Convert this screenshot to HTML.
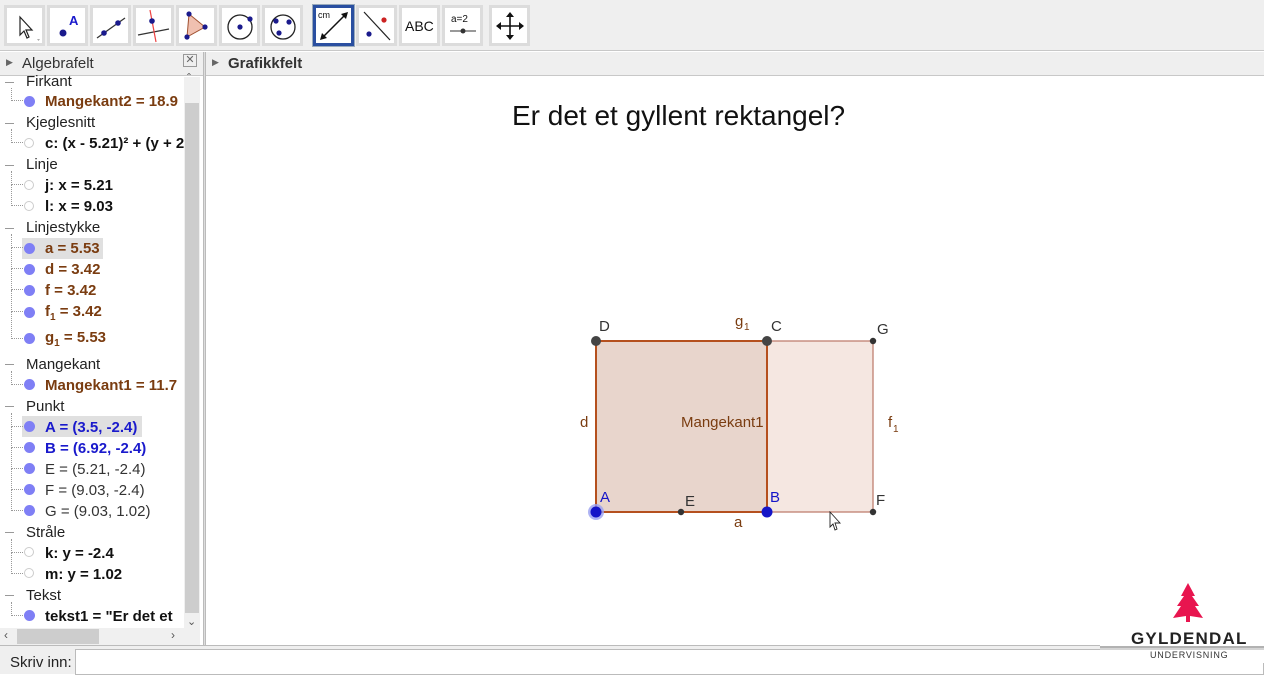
<!DOCTYPE html>
<html><head><meta charset="utf-8"><style>
*{margin:0;padding:0;box-sizing:border-box}
body{width:1264px;height:674px;overflow:hidden;background:#fff;font-family:"Liberation Sans",sans-serif;position:relative}
.abs{position:absolute}
#tb{left:0;top:0;width:1264px;height:51px;background:#efefef;border-bottom:1px solid #c8c8c8}
.btn{position:absolute;top:5px;width:41px;height:41px;background:#fff;border:3px solid #dcdcdc}
.btn.sel{border:3px solid #2a4fa0;outline:1px solid #9ab}
.btn svg{position:absolute;left:0;top:0}
.hdr{top:52px;height:24px;background:#efefef;border-bottom:1px solid #c8c8c8;font-size:15px;color:#333}
.row{position:absolute;left:0;font-size:15px;white-space:nowrap;height:21px;line-height:21px}
.cat{left:26px;color:#222}
.it{left:45px;font-weight:bold}
.br{color:#7a3c10}.bl{color:#1a1acc}.bk{color:#111}.gr{color:#333;font-weight:normal}
.dot{position:absolute;left:24px;width:11px;height:11px;border-radius:50%;background:#7f7ff5}
.odot{position:absolute;left:24px;width:10px;height:10px;border-radius:50%;border:1px solid #ccc;background:#fff}
.minus{position:absolute;left:5px;width:9px;height:1px;background:#999}
.tree{position:absolute;border-left:1px dotted #999;border-bottom:1px dotted #999;left:11px;width:12px}
.hl{position:absolute;background:#e0e0e0}
sub{font-size:10px}
</style></head><body>
<div id="tb" class="abs">
<div class="btn" style="left:4px"><svg width="35" height="35"><path d="M13 9 L13 27 L17 23 L20 30 L22 29 L19 22 L25 22 Z" fill="#fff" stroke="#222" stroke-width="1.2"/><path d="M30 31l3 0-1.5 2z" fill="#aaa"/></svg></div>
<div class="btn" style="left:47px"><svg width="35" height="35"><circle cx="13" cy="25" r="3.5" fill="#1a1a8c"/><text x="19" y="17" font-family="Liberation Sans" font-weight="bold" font-size="13" fill="#1a1acc">A</text></svg></div>
<div class="btn" style="left:90px"><svg width="35" height="35"><line x1="4" y1="30" x2="32" y2="10" stroke="#333" stroke-width="1.3"/><circle cx="11" cy="25" r="2.8" fill="#1a1a8c"/><circle cx="25" cy="15" r="2.8" fill="#1a1a8c"/></svg></div>
<div class="btn" style="left:133px"><svg width="35" height="35"><line x1="2" y1="27" x2="33" y2="21" stroke="#333" stroke-width="1.2"/><line x1="14" y1="2" x2="20" y2="34" stroke="#e44" stroke-width="1.2"/><circle cx="16" cy="13" r="2.8" fill="#1a1a8c"/></svg></div>
<div class="btn" style="left:176px"><svg width="35" height="35"><polygon points="10,6 26,19 8,29" fill="#f0c0b0" stroke="#a05030"/><circle cx="10" cy="6" r="2.6" fill="#1a1a8c"/><circle cx="26" cy="19" r="2.6" fill="#1a1a8c"/><circle cx="8" cy="29" r="2.6" fill="#1a1a8c"/></svg></div>
<div class="btn" style="left:219px"><svg width="35" height="35"><circle cx="18" cy="19" r="12" fill="none" stroke="#222" stroke-width="1.3"/><circle cx="18" cy="19" r="2.6" fill="#1a1a8c"/><circle cx="28" cy="11" r="2.6" fill="#1a1a8c"/></svg></div>
<div class="btn" style="left:262px"><svg width="35" height="35"><circle cx="18" cy="19" r="12" fill="none" stroke="#222" stroke-width="1.3"/><circle cx="11" cy="13" r="2.6" fill="#1a1a8c"/><circle cx="24" cy="14" r="2.6" fill="#1a1a8c"/><circle cx="14" cy="25" r="2.6" fill="#1a1a8c"/></svg></div>
<div class="btn sel" style="left:313px"><svg width="35" height="35"><text x="2" y="10" font-family="Liberation Sans" font-size="9" fill="#111">cm</text><line x1="6" y1="30" x2="30" y2="6" stroke="#111" stroke-width="1.5"/><path d="M4 32l7-2-5-5z M32 4l-7 2 5 5z" fill="#111"/></svg></div>
<div class="btn" style="left:356px"><svg width="35" height="35"><line x1="5" y1="4" x2="31" y2="32" stroke="#222" stroke-width="1.2"/><circle cx="25" cy="12" r="2.6" fill="#c22"/><circle cx="10" cy="26" r="2.6" fill="#1a1a8c"/></svg></div>
<div class="btn" style="left:399px"><svg width="35" height="35"><text x="3" y="23" font-family="Liberation Sans" font-size="14" fill="#111">ABC</text></svg></div>
<div class="btn" style="left:442px"><svg width="35" height="35"><text x="6" y="14" font-family="Liberation Sans" font-size="10" fill="#111">a=2</text><line x1="5" y1="23" x2="31" y2="23" stroke="#333"/><circle cx="18" cy="23" r="2.5" fill="#333"/></svg></div>
<div class="btn" style="left:489px"><svg width="35" height="35"><path d="M18 6v24M6 18h24" stroke="#111" stroke-width="1.6"/><path d="M18 4l-4 5h8zM18 32l-4-5h8zM4 18l5-4v8zM32 18l-5-4v8z" fill="#111"/></svg></div>
</div>
<!-- headers -->
<div class="abs hdr" style="left:0;width:203px"><span style="position:absolute;left:6px;top:5px;font-size:9px;color:#666">▶</span><span style="position:absolute;left:22px;top:3px">Algebrafelt</span><div style="position:absolute;left:183px;top:2px;width:14px;height:13px;border:1px solid #999;font-size:11px;line-height:11px;text-align:center;color:#666">✕</div></div>
<div class="abs" style="left:203px;top:52px;width:3px;height:594px;background:#ddd;border-left:1px solid #bbb;border-right:1px solid #bbb"></div>
<div class="abs hdr" style="left:206px;width:1058px"><span style="position:absolute;left:6px;top:5px;font-size:9px;color:#666">▶</span><span style="position:absolute;left:22px;top:3px;font-weight:bold">Grafikkfelt</span></div>
<!-- algebra list -->
<div class="abs" style="left:0;top:77px;width:184px;height:551px;overflow:hidden">
<div class="hl" style="left:22px;top:161px;width:81px;height:21px"></div>
<div class="hl" style="left:22px;top:339px;width:120px;height:21px"></div>
</div>
<div class="abs" style="left:0;top:58px;width:184px;height:570px;overflow:hidden">
<div class="minus" style="top:24px"></div><div class="row cat" style="top:13px">Firkant</div>
<div class="tree" style="top:30px;height:13px"></div><div class="dot" style="top:38px"></div><div class="row it br" style="top:33px">Mangekant2 = 18.9</div>
<div class="minus" style="top:65px"></div><div class="row cat" style="top:54px">Kjeglesnitt</div>
<div class="tree" style="top:71px;height:14px"></div><div class="odot" style="top:80px"></div><div class="row it bk" style="top:75px">c: (x - 5.21)² + (y + 2</div>
<div class="minus" style="top:107px"></div><div class="row cat" style="top:96px">Linje</div>
<div class="tree" style="top:113px;height:14px"></div><div class="odot" style="top:122px"></div><div class="row it bk" style="top:117px">j: x = 5.21</div>
<div class="tree" style="top:127px;height:21px"></div><div class="odot" style="top:143px"></div><div class="row it bk" style="top:138px">l: x = 9.03</div>
<div class="minus" style="top:170px"></div><div class="row cat" style="top:159px">Linjestykke</div>
<div class="tree" style="top:176px;height:14px"></div><div class="dot" style="top:185px"></div><div class="row it br" style="top:180px">a = 5.53</div>
<div class="tree" style="top:190px;height:21px"></div><div class="dot" style="top:206px"></div><div class="row it br" style="top:201px">d = 3.42</div>
<div class="tree" style="top:211px;height:21px"></div><div class="dot" style="top:227px"></div><div class="row it br" style="top:222px">f = 3.42</div>
<div class="tree" style="top:232px;height:22px"></div><div class="dot" style="top:249px"></div><div class="row it br" style="top:243px">f<sub>1</sub> = 3.42</div>
<div class="tree" style="top:254px;height:27px"></div><div class="dot" style="top:275px"></div><div class="row it br" style="top:269px">g<sub>1</sub> = 5.53</div>
<div class="minus" style="top:306px"></div><div class="row cat" style="top:296px">Mangekant</div>
<div class="tree" style="top:313px;height:14px"></div><div class="dot" style="top:321px"></div><div class="row it br" style="top:317px">Mangekant1 = 11.7</div>
<div class="minus" style="top:348px"></div><div class="row cat" style="top:338px">Punkt</div>
<div class="tree" style="top:355px;height:14px"></div><div class="dot" style="top:363px"></div><div class="row it bl" style="top:359px">A = (3.5, -2.4)</div>
<div class="tree" style="top:369px;height:21px"></div><div class="dot" style="top:384px"></div><div class="row it bl" style="top:380px">B = (6.92, -2.4)</div>
<div class="tree" style="top:390px;height:21px"></div><div class="dot" style="top:405px"></div><div class="row it gr" style="top:401px">E = (5.21, -2.4)</div>
<div class="tree" style="top:411px;height:21px"></div><div class="dot" style="top:426px"></div><div class="row it gr" style="top:422px">F = (9.03, -2.4)</div>
<div class="tree" style="top:432px;height:21px"></div><div class="dot" style="top:447px"></div><div class="row it gr" style="top:443px">G = (9.03, 1.02)</div>
<div class="minus" style="top:474px"></div><div class="row cat" style="top:464px">Stråle</div>
<div class="tree" style="top:481px;height:14px"></div><div class="odot" style="top:489px"></div><div class="row it bk" style="top:485px">k: y = -2.4</div>
<div class="tree" style="top:495px;height:21px"></div><div class="odot" style="top:510px"></div><div class="row it bk" style="top:506px">m: y = 1.02</div>
<div class="minus" style="top:537px"></div><div class="row cat" style="top:527px">Tekst</div>
<div class="tree" style="top:544px;height:14px"></div><div class="dot" style="top:552px"></div><div class="row it bk" style="top:548px">tekst1 = "Er det et</div>
</div>
<!-- v scrollbar -->
<div class="abs" style="left:184px;top:77px;width:16px;height:551px;background:#f0f0f0"><div style="position:absolute;left:1px;top:26px;width:14px;height:510px;background:#cdcdcd"></div><div style="position:absolute;top:-6px;left:3px;font-size:12px;color:#555">ˆ</div><div style="position:absolute;bottom:0;left:3px;font-size:11px;color:#555">⌄</div></div>
<div class="abs" style="left:0;top:628px;width:200px;height:17px;background:#f0f0f0"><div style="position:absolute;left:17px;top:1px;width:82px;height:15px;background:#cdcdcd"></div><span style="position:absolute;left:4px;top:0;font-size:12px;color:#555">‹</span><span style="position:absolute;left:171px;top:0;font-size:12px;color:#555">›</span></div>
<!-- input bar -->
<div class="abs" style="left:0;top:645px;width:1264px;height:29px;background:#efefef;border-top:1px solid #bbb"><span style="position:absolute;left:10px;top:8px;font-size:15px;color:#222">Skriv inn:</span><div style="position:absolute;left:75px;top:3px;width:1189px;height:26px;background:#fff;border:1px solid #bbb"></div></div>
<!-- graphics -->
<div class="abs" style="left:512px;top:100px;font-size:28px;color:#111">Er det et gyllent rektangel?</div>
<svg class="abs" style="left:206px;top:77px" width="1058" height="568">
<g transform="translate(-206,-77)" font-family="Liberation Sans" font-size="15">
<rect x="596" y="341" width="171" height="171" fill="#e8d5cc" stroke="#b5501e" stroke-width="2"/>
<rect x="767" y="341" width="106" height="171" fill="#f5e7e1" stroke="#c08070" stroke-width="1.3"/>
<line x1="596" y1="341" x2="767" y2="341" stroke="#b5501e" stroke-width="2"/>
<line x1="596" y1="512" x2="767" y2="512" stroke="#b5501e" stroke-width="2"/>
<line x1="767" y1="341" x2="767" y2="512" stroke="#b5501e" stroke-width="2"/>
<circle cx="596" cy="341" r="5" fill="#444"/><circle cx="767" cy="341" r="5" fill="#444"/>
<circle cx="873" cy="341" r="3.2" fill="#333"/><circle cx="873" cy="512" r="3.2" fill="#333"/><circle cx="681" cy="512" r="3.2" fill="#333"/>
<circle cx="596" cy="512" r="8" fill="#9aa0f0" opacity="0.8"/><circle cx="596" cy="512" r="5.5" fill="#1515c8"/><circle cx="767" cy="512" r="5.5" fill="#1515c8"/>
<g fill="#333"><text x="599" y="331">D</text><text x="771" y="331">C</text><text x="877" y="334">G</text><text x="876" y="505">F</text><text x="685" y="506">E</text></g>
<g fill="#1515c8"><text x="600" y="502">A</text><text x="770" y="502">B</text></g>
<g fill="#7a3c10"><text x="580" y="427">d</text><text x="734" y="527">a</text><text x="681" y="427">Mangekant1</text><text x="735" y="326">g</text><text x="744" y="330" font-size="10">1</text><text x="888" y="427">f</text><text x="893" y="432" font-size="10">1</text></g>
<path d="M830 512 L830 527 L833 524 L835 530 L837 529 L835 523 L840 523 Z" fill="#fff" stroke="#222" stroke-width="0.9"/>
</g></svg>
<svg class="abs" style="left:1100px;top:570px;z-index:5" width="164" height="104">
<g transform="translate(-1100,-570)" font-family="Liberation Sans">
<path d="M1188 583 L1181 596 L1184 596 L1177 606 L1181 606 L1173 618 L1186 616 L1186 622 L1190 622 L1190 616 L1203 618 L1195 606 L1199 606 L1192 596 L1195 596 Z" fill="#e8154f"/>
<rect x="1100" y="625" width="164" height="38" fill="#fff"/>
<text x="1131" y="644" font-size="17" font-weight="bold" fill="#222" letter-spacing="1.2">GYLDENDAL</text>
<line x1="1100" y1="647" x2="1264" y2="647" stroke="#666"/>
<line x1="1100" y1="649" x2="1264" y2="649" stroke="#aaa"/>
<text x="1150" y="658" font-size="9" fill="#333" letter-spacing="0.8">UNDERVISNING</text>
</g></svg>
</body></html>
